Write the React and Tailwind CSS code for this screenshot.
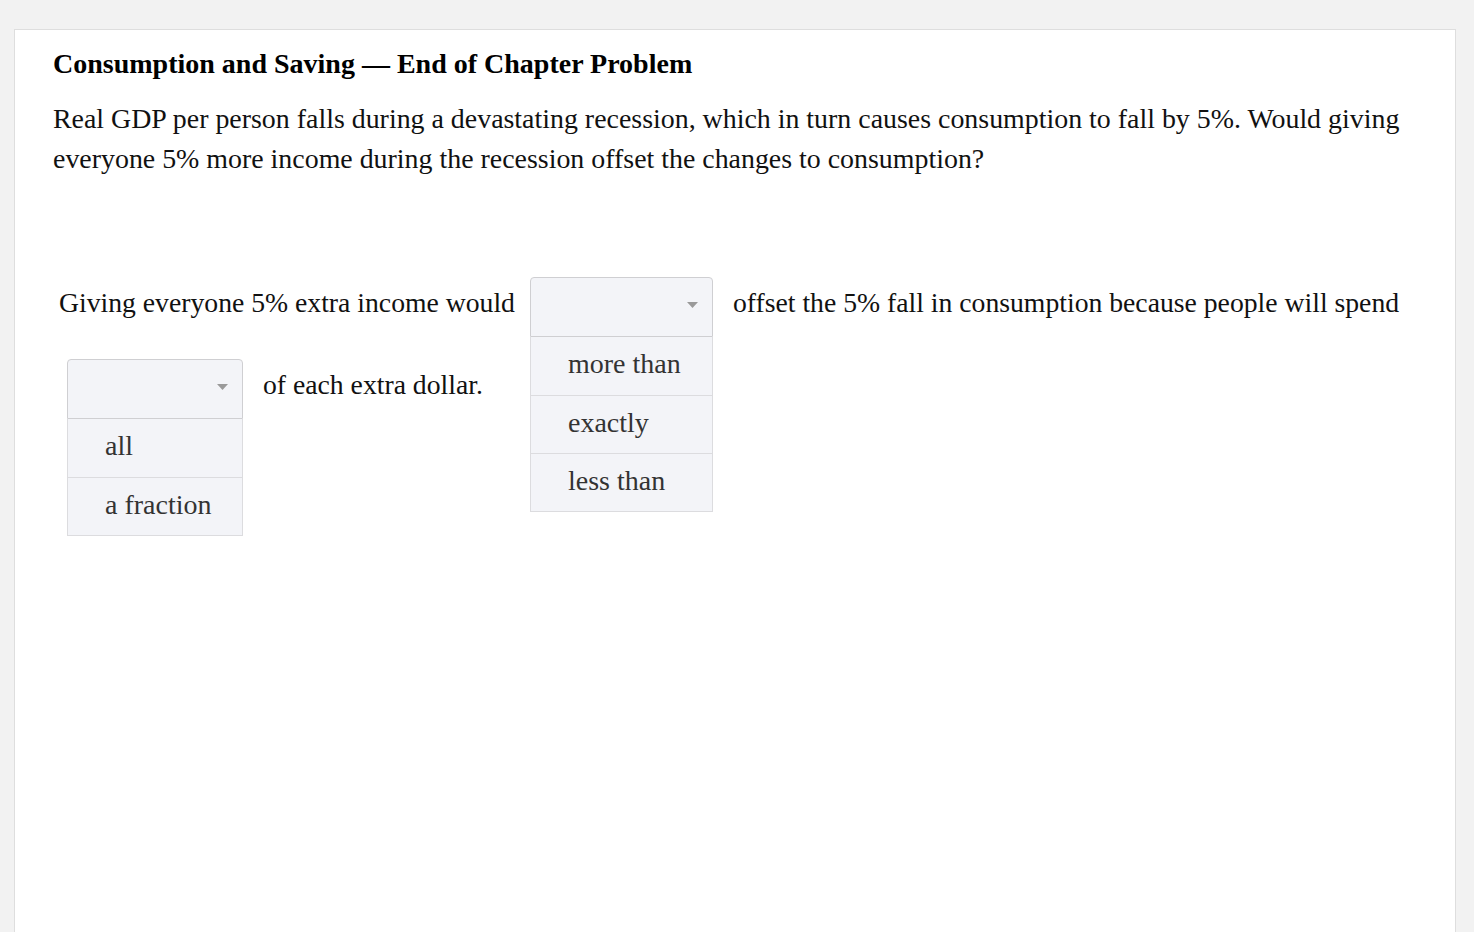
import React from "react";

function Select({ width, options }) {
  return (
    <div className="relative shrink-0">
      <div
        className={`${width} h-[60px] bg-[#f3f4f8] border border-[#cfcfd2] rounded-t-[4px] relative`}
      >
        <svg
          className="absolute right-[14px] top-[24px]"
          width="11"
          height="6"
          viewBox="0 0 11 6"
        >
          <polygon points="0,0 11,0 5.5,6" fill="#9a9a9a" />
        </svg>
      </div>
      <div
        className={`absolute left-0 top-[60px] ${width} bg-[#f3f4f8] border-x border-b border-[#dcdcdf] z-10`}
      >
        {options.map((o, i) => (
          <div
            key={o}
            className={`h-[58px] flex items-center pl-[37px] pb-[4px] text-[28px] text-[#333] ${
              i > 0 ? "border-t border-[#dcdcdf]" : ""
            }`}
          >
            {o}
          </div>
        ))}
      </div>
    </div>
  );
}

export default function App() {
  return (
    <div className="min-h-[932px] bg-[#f2f2f2] pt-[29px] pl-[14px] pr-[18px] font-['Liberation_Serif','Times_New_Roman',serif]">
      <div className="min-h-[903px] bg-white border border-[#dedede] border-b-0 pl-[38px] pr-[40px] pt-[18px] text-[#111]">
        <h1 className="text-[28px] font-bold leading-[32px] text-black">
          Consumption and Saving — End of Chapter Problem
        </h1>
        <p className="mt-[19px] text-[27.9px] leading-[40px]">
          Real GDP per person falls during a devastating recession, which in
          turn causes consumption to fall by 5%. Would giving everyone 5% more
          income during the recession offset the changes to consumption?
        </p>
        <div className="mt-[98px] pl-[6px] text-[27.7px]">
          <div className="flex items-center h-[60px]">
            <span className="-mt-[8px]">Giving everyone 5% extra income would</span>
            <div className="ml-[15px] mr-[20px]">
              <Select
                width="w-[183px]"
                options={["more than", "exactly", "less than"]}
              />
            </div>
            <span className="-mt-[8px] whitespace-nowrap">
              offset the 5% fall in consumption because people will spend
            </span>
          </div>
          <div className="flex items-center h-[60px] mt-[22px]">
            <div className="ml-[8px] mr-[20px]">
              <Select width="w-[176px]" options={["all", "a fraction"]} />
            </div>
            <span className="-mt-[8px]">of each extra dollar.</span>
          </div>
        </div>
      </div>
    </div>
  );
}
